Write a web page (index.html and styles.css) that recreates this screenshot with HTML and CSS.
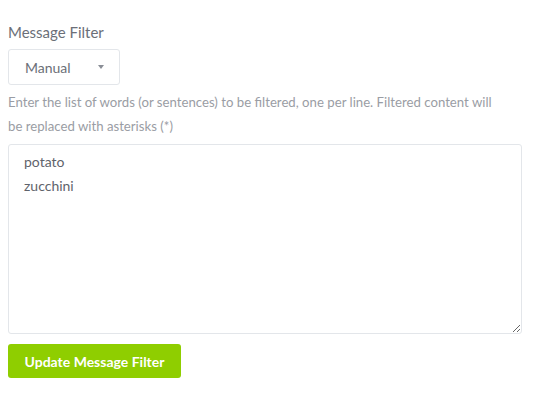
FILE: index.html
```html
<!DOCTYPE html>
<html>
<head>
<meta charset="utf-8">
<link rel="stylesheet" href="styles.css">
</head>
<body>
<div class="form">
  <label class="label">Message Filter</label>
  <div class="select">
    <span>Manual</span>
    <span class="caret"></span>
  </div>
  <p class="help">Enter the list of words (or sentences) to be filtered, one per line. Filtered content will be replaced with asterisks (*)</p>
  <textarea class="words">potato
zucchini</textarea>
  <div class="actions"><button class="btn">Update Message Filter</button></div>
</div>
</body>
</html>
```

FILE: styles.css
```css
html, body { margin: 0; padding: 0; background: #fff; }
body { font-family: Lato, "Open Sans", sans-serif; }
.form {
  padding: 22px 22px 0 8px;
  display: flex;
  flex-direction: column;
  align-items: flex-start;
}
.label {
  font-size: 15px;
  color: #6b6f78;
  line-height: 20px;
  margin-bottom: 7px;
}
.select {
  box-sizing: border-box;
  width: 112px;
  height: 36px;
  border: 1px solid #e3e6ea;
  border-radius: 3px;
  display: flex;
  align-items: center;
  justify-content: space-between;
  padding: 0 15px 0 16px;
  font-size: 14px;
  color: #6b6f78;
}
.caret {
  width: 0; height: 0;
  border-left: 3.5px solid transparent;
  border-right: 3.5px solid transparent;
  border-top: 4px solid #8a8e96;
}
.help {
  margin: 5px 0 0 0;
  max-width: 494px;
  font-size: 13.2px;
  line-height: 24px;
  color: #9a9da4;
}
.words {
  box-sizing: border-box;
  margin-top: 6px;
  width: 514px;
  height: 190px;
  border: 1px solid #e3e6ea;
  border-radius: 3px;
  padding: 5px 15px;
  font-family: Lato, "Open Sans", sans-serif;
  font-size: 14px;
  line-height: 24px;
  color: #5f636b;
  resize: both;
  outline: none;
}
.actions { margin-top: 10px; }
.btn {
  box-sizing: border-box;
  width: 173px;
  height: 34px;
  border: none;
  border-radius: 3px;
  background: #8fce00;
  color: #fff;
  font-family: Lato, "Open Sans", sans-serif;
  font-weight: 700;
  font-size: 14px;
  padding: 0;
}
```
